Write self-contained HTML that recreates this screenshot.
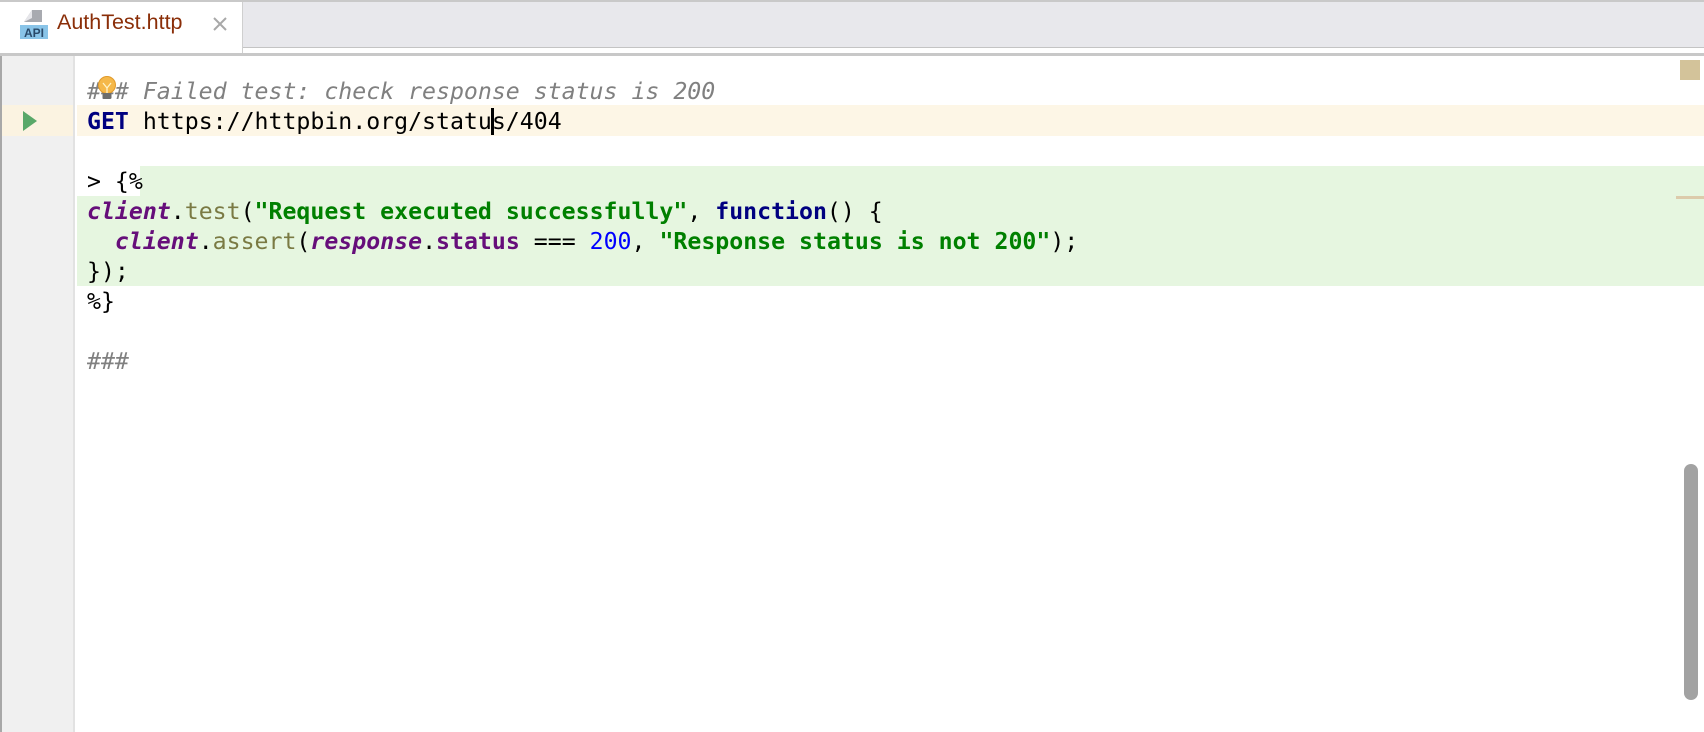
<!DOCTYPE html>
<html><head><meta charset="utf-8"><style>
*{margin:0;padding:0;box-sizing:border-box}
body{width:1704px;height:732px;overflow:hidden;background:#fff;position:relative;font-family:"DejaVu Sans Mono",monospace}
.abs{position:absolute}
.bar{left:0;top:0;width:1704px;height:48px;background:#e8e8ec;border-top:2px solid #c9c9c9;border-bottom:1px solid #c4c4c4}
.tab{left:0;top:2px;width:243px;height:52px;background:#fff;border-right:1px solid #cfcfcf}
.sep{left:0;top:53px;width:1704px;height:3px;background:#c8c8c8}
.gut{left:0;top:56px;width:75px;height:676px;background:#f0f0f0;border-left:2px solid #a8a8a8;border-right:2px solid #e2e2e2}
.ln{left:87px;height:30px;line-height:30px;font-size:23.2px;white-space:pre;color:#000}
.b{font-weight:bold}
.cm{color:#808080;font-style:italic}
.kw{color:#000080;font-weight:bold}
.cl{color:#660e7a;font-weight:bold;font-style:italic}
.pp{color:#660e7a;font-weight:bold}
.fn{color:#7a7a43}
.st{color:#008000;font-weight:bold}
.nm{color:#0000ff}
</style></head><body>
<div class="abs bar"></div>
<div class="abs tab"></div>
<div class="abs sep"></div>
<!-- API icon -->
<svg class="abs" style="left:18px;top:8px" width="34" height="34" viewBox="0 0 34 34">
<path d="M14 2 L24 2 L24 14 L6 14 Z" fill="#a8aab0"/>
<path d="M14 2 L14 10 L6 14 Z" fill="#e6e6ea"/>
<rect x="2" y="17" width="28" height="14" fill="#89c4e8"/>
<text x="16" y="29" font-family="Liberation Sans" font-weight="bold" font-size="12" fill="#2a4a6a" text-anchor="middle">API</text>
</svg>
<div class="abs" style="left:57px;top:10px;font-family:'Liberation Sans',sans-serif;font-size:21.5px;color:#8a2e08">AuthTest.http</div>
<svg class="abs" style="left:212px;top:16px" width="16" height="16"><path d="M2 2L14 14M14 2L2 14" stroke="#a8a8a8" stroke-width="2"/></svg>

<div class="abs gut"></div>
<!-- GET line highlight -->
<div class="abs" style="left:2px;top:105px;width:71px;height:31px;background:#fbf3e1"></div>
<div class="abs" style="left:77px;top:105px;width:1627px;height:31px;background:#fdf6e6"></div>
<!-- green band -->
<div class="abs" style="left:140px;top:166px;width:1564px;height:30px;background:#e6f6e0"></div>
<div class="abs" style="left:77px;top:196px;width:1627px;height:90px;background:#e6f6e0"></div>
<!-- play -->
<svg class="abs" style="left:22px;top:110px" width="16" height="22"><path d="M1 1L15 11L1 21Z" fill="#59a869"/></svg>

<div class="abs ln cm" style="top:77px">### Failed test: check response status is 200</div>
<!-- lightbulb -->
<svg class="abs" style="left:97px;top:75px" width="20" height="28" viewBox="0 0 20 28">
<circle cx="10" cy="10" r="8.5" fill="#f5b84a" stroke="#e19a2a" stroke-width="1"/>
<path d="M6 8l4 5 4-5M10 13v5" stroke="#fff3c8" stroke-width="1.3" fill="none"/>
<rect x="5.5" y="18" width="9" height="6" rx="1.5" fill="#6d6d6d"/>
</svg>
<div class="abs ln" style="top:107px"><span class="kw">GET</span> https://httpbin.org/status/404</div>
<div class="abs" style="left:491px;top:108px;width:3px;height:27px;background:#000"></div>
<div class="abs ln" style="top:167px">&gt; {%</div>
<div class="abs ln" style="top:197px"><span class="cl">client</span>.<span class="fn">test</span>(<span class="st">"Request executed successfully"</span>, <span class="kw">function</span>() {</div>
<div class="abs ln" style="top:227px">  <span class="cl">client</span>.<span class="fn">assert</span>(<span class="cl">response</span>.<span class="pp">status</span> === <span class="nm">200</span>, <span class="st">"Response status is not 200"</span>);</div>
<div class="abs ln" style="top:257px">});</div>
<div class="abs ln" style="top:287px">%}</div>
<div class="abs ln cm" style="top:347px;font-style:normal">###</div>

<div class="abs" style="left:1680px;top:60px;width:20px;height:20px;background:#d3c39a"></div>
<div class="abs" style="left:1676px;top:196px;width:28px;height:3px;background:#dccbab"></div>
<div class="abs" style="left:1684px;top:464px;width:14px;height:236px;background:#a2a2a2;border-radius:7px"></div>
</body></html>
